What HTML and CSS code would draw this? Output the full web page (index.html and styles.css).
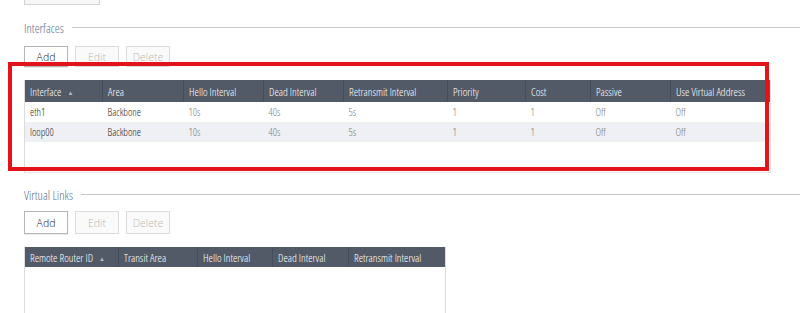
FILE: index.html
```html
<!DOCTYPE html>
<html lang="en">
<head>
  <meta charset="UTF-8" />
  <meta name="viewport" content="width=device-width, initial-scale=1.0"/>
  <title>OSPF</title>
  <link rel="stylesheet" href="styles.css">
</head>
<body>
  <div class="page">
    <div class="top-stub"></div>

    <div class="secao">
      <span class="secao-titulo">Interfaces</span>
      <span class="secao-linha"></span>
    </div>
    <div class="botoes">
      <button class="btn">Add</button>
      <button class="btn" disabled>Edit</button>
      <button class="btn" disabled>Delete</button>
    </div>

    <table class="grade grade-interfaces">
      <colgroup>
        <col style="width:78px"><col style="width:81px"><col style="width:80px">
        <col style="width:80px"><col style="width:104px"><col style="width:78px">
        <col style="width:65px"><col style="width:80px"><col>
      </colgroup>
      <thead>
        <tr>
          <th>Interface <span class="seta">&#9650;</span></th>
          <th>Area</th>
          <th>Hello Interval</th>
          <th>Dead Interval</th>
          <th>Retransmit Interval</th>
          <th>Priority</th>
          <th>Cost</th>
          <th>Passive</th>
          <th>Use Virtual Address</th>
        </tr>
      </thead>
      <tbody>
        <tr>
          <td class="forte">eth1</td><td class="forte">Backbone</td><td>10s</td><td>40s</td>
          <td>5s</td><td>1</td><td>1</td><td>Off</td><td>Off</td>
        </tr>
        <tr class="alt">
          <td class="forte">loop00</td><td class="forte">Backbone</td><td>10s</td><td>40s</td>
          <td>5s</td><td>1</td><td>1</td><td>Off</td><td>Off</td>
        </tr>
        <tr class="vazio"><td colspan="9"></td></tr>
      </tbody>
    </table>

    <div class="secao secao-vl">
      <span class="secao-titulo">Virtual Links</span>
      <span class="secao-linha"></span>
    </div>
    <div class="botoes botoes-vl">
      <button class="btn">Add</button>
      <button class="btn" disabled>Edit</button>
      <button class="btn" disabled>Delete</button>
    </div>

    <table class="grade grade-vl">
      <colgroup>
        <col style="width:94px"><col style="width:79px"><col style="width:75px">
        <col style="width:76px"><col>
      </colgroup>
      <thead>
        <tr>
          <th>Remote Router ID <span class="seta">&#9650;</span></th>
          <th>Transit Area</th>
          <th>Hello Interval</th>
          <th>Dead Interval</th>
          <th>Retransmit Interval</th>
        </tr>
      </thead>
      <tbody>
        <tr class="vazio-vl"><td colspan="5"></td></tr>
      </tbody>
    </table>
  </div>

  <div class="destaque"></div>
</body>
</html>
```

FILE: styles.css
```css
body {
  margin: 0;
  background-color: #fff;
  font-family: "Liberation Sans Narrow", "Open Sans", sans-serif;
  font-stretch: condensed;
  font-weight: 300;
  font-size: 10.5px;
  color: #333;
  overflow: hidden;
}

.page {
  padding-left: 24px;
}

.top-stub {
  width: 74px;
  height: 4px;
  border: 1px solid #d4d4d4;
  border-top: none;
  background-color: #f7f7f7;
}

.secao {
  display: flex;
  align-items: center;
  margin-top: 15px;
  height: 16px;
}

.secao-titulo {
  font-size: 12.5px;
  color: #62728d;
}

.secao-linha {
  flex: 1;
  height: 0;
  border-top: 1px solid #c8c8c8;
  margin-left: 8px;
  margin-top: -2px;
}

.botoes {
  display: flex;
  gap: 7px;
  margin-top: 10px;
}

.btn {
  width: 44px;
  height: 21px;
  padding: 0;
  font-family: inherit;
  font-weight: 300;
  font-size: 10.5px;
  color: #222;
  background-color: #fff;
  border: 1px solid #b5b5b5;
  box-shadow: 0 1px 1px rgba(0, 0, 0, 0.08);
}

.btn:disabled {
  color: #b8b8b8;
  background-color: #fafafa;
  border-color: #dcdcdc;
  box-shadow: none;
}

.grade {
  border-collapse: collapse;
  table-layout: fixed;
  margin-top: 13px;
  border-left: 1px solid #dcdcdc;
  border-right: 1px solid #dcdcdc;
}

.grade-interfaces {
  width: 747px;
  border-bottom: 1px solid #e4e4e4;
}

.grade th {
  height: 22px;
  padding: 0 5px;
  background-color: #525a68;
  color: #fff;
  font-weight: 300;
  font-size: 11px;
  text-align: left;
  white-space: nowrap;
  border-left: 1px solid #474e5b;
}

.grade th:first-child {
  border-left: none;
}

.seta {
  font-size: 6px;
  color: #b4bac5;
  margin-left: 4px;
  vertical-align: 1px;
}

.grade td {
  height: 20px;
  padding: 0 5px;
  color: #7d7d7d;
  white-space: nowrap;
}

.grade td.forte {
  color: #2a2a2a;
}

.grade tr.alt td {
  background-color: #eef0f3;
}

.grade tr.vazio td {
  height: 30px;
}

.secao-vl {
  margin-top: 14px;
}

.botoes-vl {
  margin-top: 8px;
}

.botoes-vl .btn {
  height: 23px;
}

.grade-vl {
  width: 422px;
  margin-top: 13px;
}

.grade-vl th {
  height: 20px;
}

.grade tr.vazio-vl td {
  height: 60px;
}

.destaque {
  position: absolute;
  left: 8px;
  top: 62px;
  width: 761px;
  height: 109px;
  box-sizing: border-box;
  border: 4px solid #e3131b;
}
```
